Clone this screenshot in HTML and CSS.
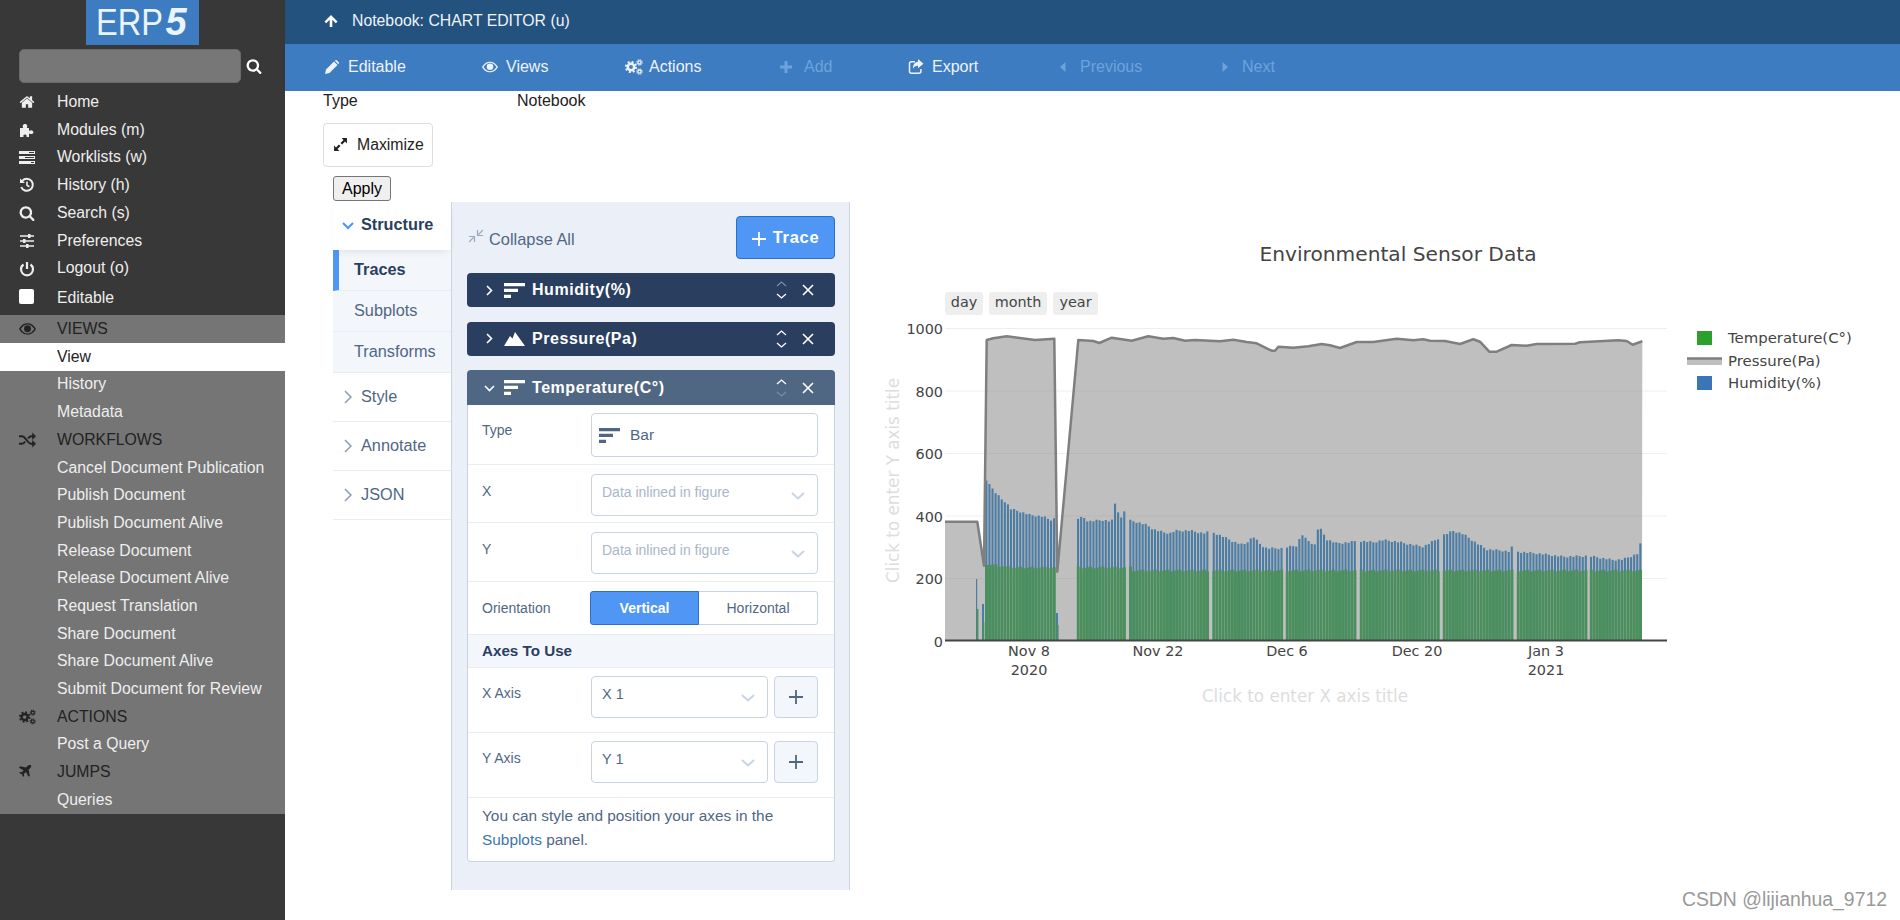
FILE: index.html
```html
<!DOCTYPE html>
<html lang="en">
<head>
<meta charset="utf-8">
<title>Notebook: CHART EDITOR</title>
<link rel="stylesheet" href="styles.css">
</head>
<body>
<svg class="defs" xmlns="http://www.w3.org/2000/svg">
  <symbol id="i-home" viewBox="0 0 1792 1792"><path d="M1472 992v480q0 26-19 45t-45 19h-384v-384h-256v384h-384q-26 0-45-19t-19-45v-480q0-1 .5-3t.5-3l575-474 575 474q1 2 1 6zm223-69l-62 74q-8 9-21 11h-3q-13 0-21-7l-692-577-692 577q-12 8-24 7-13-2-21-11l-62-74q-8-10-7-23.5t11-21.5l719-599q32-26 76-26t76 26l244 204v-195q0-14 9-23t23-9h192q14 0 23 9t9 23v408l219 182q10 8 11 21.5t-7 23.5z"/></symbol>
  <symbol id="i-search" viewBox="0 0 1792 1792"><path d="M1216 832q0-185-131.500-316.500t-316.500-131.500-316.500 131.500-131.500 316.500 131.500 316.500 316.500 131.500 316.500-131.500 131.500-316.500zm512 832q0 52-38 90t-90 38q-54 0-90-38l-343-342q-179 124-399 124-143 0-273.500-55.500t-225-150-150-225-55.500-273.500 55.500-273.500 150-225 225-150 273.500-55.500 273.500 55.500 225 150 150 225 55.500 273.500q0 220-124 399l343 343q37 37 37 90z"/></symbol>
  <symbol id="i-puzzle" viewBox="0 0 16 16"><path d="M1 6h3.200c-.9-1.700-.5-4 1.800-4s2.700 2.300 1.800 4H10v3c1.300-.9 3.100-1 4 .2.500.8.500 1.300 0 2-.9 1.200-2.700 1.100-4 .2V15H7.400c.6-1.300.2-2.600-1.400-2.600S4 13.700 4.600 15H1z"/></symbol>
  <symbol id="i-tasks" viewBox="0 0 16 16"><path d="M0 1h16v3H0zM0 6h16v3H0zM0 11h16v3H0z"/><path class="cut" d="M10 2h5v1h-5zM6 7h9v1H6zM12 12h3v1h-3z"/></symbol>
  <symbol id="i-history" viewBox="0 0 16 16"><path class="stroke" stroke-width="2" d="M3.300 3.800A6 6 0 1 1 2.200 10"/><path d="M1 1.500l5 4.500H1z"/><path class="stroke" stroke-width="1.600" d="M8 4.500V8.300l2.400 1.400"/></symbol>
  <symbol id="i-sliders" viewBox="0 0 16 16"><path class="stroke" stroke-width="1.300" d="M1 3h14M1 8h14M1 13h14"/><path d="M9 1h2.500v4H9zM4 6h2.500v4H4zM7 11h2.500v4H7z"/></symbol>
  <symbol id="i-power" viewBox="0 0 16 16"><path class="stroke" stroke-width="2.200" d="M4.500 3.500a6 6 0 1 0 7 0"/><path class="stroke" stroke-width="2.200" d="M8 1v7"/></symbol>
  <symbol id="i-eye" viewBox="0 0 18 14"><path fill-rule="evenodd" d="M0 7C3 2 6 1 9 1s6 1 9 6c-3 5-6 6-9 6s-6-1-9-6zm1.800 0C4 10.300 6.500 11.700 9 11.700S14 10.300 16.200 7C14 3.700 11.500 2.300 9 2.300S4 3.700 1.800 7z"/><circle cx="9" cy="6.800" r="3.700"/></symbol>
  <symbol id="i-shuffle" viewBox="0 0 18 16"><path class="stroke" stroke-width="2" d="M0 4h3c4 0 6 8 10 8h2M0 12h3c1.500 0 2.500-1 3.500-2.500M9.500 6.500C10.500 5 11.500 4 13 4h2"/><path d="M14 0l4 4-4 4zM14 8l4 4-4 4z"/></symbol>
  <symbol id="i-gears" viewBox="0 0 18 16"><circle class="stroke" cx="6" cy="8" r="3.200" stroke-width="2.500"/><circle class="stroke" cx="6" cy="8" r="5.100" stroke-width="2" stroke-dasharray="2 2"/><circle class="stroke" cx="14.500" cy="3.400" r="1.600" stroke-width="1.300"/><circle class="stroke" cx="14.500" cy="3.400" r="2.700" stroke-width="1.100" stroke-dasharray="1.100 1"/><circle class="stroke" cx="14.500" cy="12.600" r="1.600" stroke-width="1.300"/><circle class="stroke" cx="14.500" cy="12.600" r="2.700" stroke-width="1.100" stroke-dasharray="1.100 1"/></symbol>
  <symbol id="i-plane" viewBox="0 -1 18 18" preserveAspectRatio="xMinYMid"><path d="M13.500.5c.7.700-.2 2.400-1 3.200L10.800 5.400l1.400 6.700-1.500 1.200-2.800-5.400L5.400 10.300l.4 2-1.100 1.200-1.500-3-3-1.500 1.100-1.100 2 .4L5.200 5.900 0 3.100l1.200-1.500 6.700 1.400 1.700-1.700C10.400.500 12.800-.2 13.500.5z"/></symbol>
  <symbol id="i-pencil" viewBox="0 0 16 16"><path d="M1 15l1-4.500L10 2.500 13.500 6l-8 8zM11 1.500c.7-.7 1.500-.7 2.100 0L14.500 3c.6.600.6 1.400 0 2L14.300 5.200 10.800 1.700z"/></symbol>
  <symbol id="i-export" viewBox="0 0 16 16"><path class="stroke" stroke-width="1.500" d="M7 2.800H3.500A2 2 0 0 0 1.500 4.800v7.400a2 2 0 0 0 2 2h7.400a2 2 0 0 0 2-2V10"/><path d="M10 0l5.500 4.700L10 9.300V6.800C7.500 6.800 5.800 7.500 5 10 4.700 6 6.700 3 10 2.800z"/></symbol>
  <symbol id="i-expand" viewBox="0 0 14 14"><path d="M8 1h5v5l-1.800-1.800L8.500 7 7 5.500l2.800-2.700zM6 13H1V8l1.800 1.800L5.500 7 7 8.500l-2.800 2.700z"/></symbol>
  <symbol id="i-bars" viewBox="0 0 21 15"><path d="M0 0h21v3.300H0zM0 5.800h14v3.300H0zM0 11.700h7V15H0z"/></symbol>
  <symbol id="i-area" viewBox="0 0 21 15"><path d="M0 15L6 5l2.500 2.500L11 1l10 14z"/></symbol>
  <symbol id="i-collapse" viewBox="0 0 14 14"><path d="M14 1L9.500 5.500M8.500 1v5.500H14M0 13l4.500-4.500M5.500 13V7.500H0" class="stroke" stroke-width="1.200"/></symbol>
</svg>

<div class="app">
  <aside class="sidebar">
    <div class="logo-wrap"><div class="logo"><span class="logo-erp">ERP</span><span class="logo-five">5</span></div></div>
    <div class="search-row">
      <div class="search-box"></div>
      <svg class="search-icon"><use href="#i-search"/></svg>
    </div>
    <nav class="menu-top">
      <a class="mi"><svg class="mi-ic"><use href="#i-home"/></svg>Home</a>
      <a class="mi"><svg class="mi-ic"><use href="#i-puzzle"/></svg>Modules (m)</a>
      <a class="mi"><svg class="mi-ic"><use href="#i-tasks"/></svg>Worklists (w)</a>
      <a class="mi"><svg class="mi-ic"><use href="#i-history"/></svg>History (h)</a>
      <a class="mi"><svg class="mi-ic"><use href="#i-search"/></svg>Search (s)</a>
      <a class="mi"><svg class="mi-ic"><use href="#i-sliders"/></svg>Preferences</a>
      <a class="mi"><svg class="mi-ic"><use href="#i-power"/></svg>Logout (o)</a>
      <a class="mi mi-check"><span class="checkbox"></span>Editable</a>
    </nav>
    <nav class="menu-band">
      <div class="mi mi-head"><svg class="mi-ic"><use href="#i-eye"/></svg>VIEWS</div>
      <a class="mi mi-active">View</a>
      <a class="mi">History</a>
      <a class="mi">Metadata</a>
      <div class="mi mi-head"><svg class="mi-ic"><use href="#i-shuffle"/></svg>WORKFLOWS</div>
      <a class="mi">Cancel Document Publication</a>
      <a class="mi">Publish Document</a>
      <a class="mi">Publish Document Alive</a>
      <a class="mi">Release Document</a>
      <a class="mi">Release Document Alive</a>
      <a class="mi">Request Translation</a>
      <a class="mi">Share Document</a>
      <a class="mi">Share Document Alive</a>
      <a class="mi">Submit Document for Review</a>
      <div class="mi mi-head"><svg class="mi-ic"><use href="#i-gears"/></svg>ACTIONS</div>
      <a class="mi">Post a Query</a>
      <div class="mi mi-head"><svg class="mi-ic"><use href="#i-plane"/></svg>JUMPS</div>
      <a class="mi">Queries</a>
    </nav>
  </aside>

  <main class="main">
    <header class="titlebar">
      <svg class="up-ic" viewBox="0 0 14 14"><path d="M7 1l6.500 6.500-1.700 1.700L8.300 5.800V13H5.700V5.800L2.200 9.200.5 7.500z"/></svg>
      <span>Notebook: CHART EDITOR (u)</span>
    </header>
    <div class="toolbar">
      <a class="tool tool-edit"><svg class="tool-ic"><use href="#i-pencil"/></svg>Editable</a>
      <a class="tool tool-views"><svg class="tool-ic"><use href="#i-eye"/></svg>Views</a>
      <a class="tool tool-actions"><svg class="tool-ic"><use href="#i-gears"/></svg>Actions</a>
      <a class="tool tool-add off"><svg class="tool-ic tool-plus" viewBox="0 0 12 12"><path d="M4.500 0h3v4.500H12v3H7.500V12h-3V7.500H0v-3h4.500z"/></svg>Add</a>
      <a class="tool tool-export"><svg class="tool-ic"><use href="#i-export"/></svg>Export</a>
      <a class="tool tool-prev off"><svg class="tool-tri" viewBox="0 0 6 10"><path d="M5.500 0v10L0 5z"/></svg>Previous</a>
      <a class="tool tool-next off"><svg class="tool-tri" viewBox="0 0 6 10"><path d="M.5 0v10L6 5z"/></svg>Next</a>
    </div>

    <section class="content">
      <div class="type-row"><span class="type-label">Type</span><span>Notebook</span></div>
      <a class="maximize"><svg class="max-ic"><use href="#i-expand"/></svg>Maximize</a>
      <button class="apply" type="button">Apply</button>

      <div class="editor">
        <div class="side-nav">
          <div class="group group-open">
            <svg class="gchev gchev-open" viewBox="0 0 12 8"><path d="M1 1l5 5 5-5"/></svg>Structure
          </div>
          <div class="subs">
            <div class="sub sub-active">Traces</div>
            <div class="sub">Subplots</div>
            <div class="sub">Transforms</div>
          </div>
          <div class="group"><svg class="gchev" viewBox="0 0 8 14"><path d="M1 1l6 6-6 6"/></svg>Style</div>
          <div class="group"><svg class="gchev" viewBox="0 0 8 14"><path d="M1 1l6 6-6 6"/></svg>Annotate</div>
          <div class="group"><svg class="gchev" viewBox="0 0 8 14"><path d="M1 1l6 6-6 6"/></svg>JSON</div>
        </div>

        <div class="panel">
          <div class="panel-top">
            <a class="collapse"><svg class="collapse-ic"><use href="#i-collapse"/></svg>Collapse All</a>
            <a class="trace-btn"><svg class="trace-plus" viewBox="0 0 14 14"><path d="M7 0v14M0 7h14"/></svg>Trace</a>
          </div>

          <div class="fold">
            <div class="fold-head">
              <svg class="fchev" viewBox="0 0 7 11"><path d="M1 1l4.500 4.500L1 10"/></svg>
              <svg class="fold-type"><use href="#i-bars"/></svg>
              <span class="fold-name">Humidity(%)</span>
              <span class="updown">
                <svg class="ud dim" viewBox="0 0 11 6"><path d="M1 5l4.500-4L10 5"/></svg>
                <svg class="ud" viewBox="0 0 11 6"><path d="M1 1l4.500 4L10 1"/></svg>
              </span>
              <svg class="fclose" viewBox="0 0 12 12"><path d="M1 1l10 10M11 1L1 11"/></svg>
            </div>
          </div>

          <div class="fold">
            <div class="fold-head">
              <svg class="fchev" viewBox="0 0 7 11"><path d="M1 1l4.500 4.500L1 10"/></svg>
              <svg class="fold-type"><use href="#i-area"/></svg>
              <span class="fold-name">Pressure(Pa)</span>
              <span class="updown">
                <svg class="ud" viewBox="0 0 11 6"><path d="M1 5l4.500-4L10 5"/></svg>
                <svg class="ud" viewBox="0 0 11 6"><path d="M1 1l4.500 4L10 1"/></svg>
              </span>
              <svg class="fclose" viewBox="0 0 12 12"><path d="M1 1l10 10M11 1L1 11"/></svg>
            </div>
          </div>

          <div class="fold">
            <div class="fold-head fold-head-open">
              <svg class="fchev fchev-open" viewBox="0 0 11 7"><path d="M1 1l4.500 4.500L10 1"/></svg>
              <svg class="fold-type"><use href="#i-bars"/></svg>
              <span class="fold-name">Temperature(C°)</span>
              <span class="updown">
                <svg class="ud" viewBox="0 0 11 6"><path d="M1 5l4.500-4L10 5"/></svg>
                <svg class="ud dim" viewBox="0 0 11 6"><path d="M1 1l4.500 4L10 1"/></svg>
              </span>
              <svg class="fclose" viewBox="0 0 12 12"><path d="M1 1l10 10M11 1L1 11"/></svg>
            </div>
            <div class="fold-body">
              <div class="row row-type">
                <label class="row-label">Type</label>
                <div class="input input-type"><svg class="type-ic"><use href="#i-bars"/></svg>Bar</div>
              </div>
              <div class="row row-data">
                <label class="row-label">X</label>
                <div class="input input-select ghost">Data inlined in figure<svg class="schev" viewBox="0 0 14 8"><path d="M1 1l6 5.500L13 1"/></svg></div>
              </div>
              <div class="row row-data row-data-y">
                <label class="row-label">Y</label>
                <div class="input input-select ghost">Data inlined in figure<svg class="schev" viewBox="0 0 14 8"><path d="M1 1l6 5.500L13 1"/></svg></div>
              </div>
              <div class="row row-orient">
                <label class="row-label row-label-mid">Orientation</label>
                <div class="radio">
                  <span class="radio-btn radio-on">Vertical</span>
                  <span class="radio-btn radio-off">Horizontal</span>
                </div>
              </div>
              <div class="axes-head">Axes To Use</div>
              <div class="row row-axis">
                <label class="row-label">X Axis</label>
                <div class="input input-select input-axis">X 1<svg class="schev" viewBox="0 0 14 8"><path d="M1 1l6 5.500L13 1"/></svg></div>
                <a class="add-axis"><svg class="add-ic" viewBox="0 0 14 14"><path d="M7 0v14M0 7h14"/></svg></a>
              </div>
              <div class="row row-axis">
                <label class="row-label">Y Axis</label>
                <div class="input input-select input-axis">Y 1<svg class="schev" viewBox="0 0 14 8"><path d="M1 1l6 5.500L13 1"/></svg></div>
                <a class="add-axis"><svg class="add-ic" viewBox="0 0 14 14"><path d="M7 0v14M0 7h14"/></svg></a>
              </div>
              <p class="help">You can style and position your axes in the <a class="help-link">Subplots</a> panel.</p>
            </div>
          </div>
        </div>

        <svg class="chart" viewBox="850 202 1050 700" xmlns="http://www.w3.org/2000/svg">
          <text class="c-title" x="1398" y="261">Environmental Sensor Data</text>
          <g class="c-range">
            <rect x="945" y="292" width="38" height="23" rx="3"/>
            <rect x="989" y="292" width="58" height="23" rx="3"/>
            <rect x="1053" y="292" width="45" height="23" rx="3"/>
          </g>
          <text class="c-tick c-mid" x="964" y="307">day</text>
          <text class="c-tick c-mid" x="1018" y="307">month</text>
          <text class="c-tick c-mid" x="1075.500" y="307">year</text>
          <g class="c-grid">
            <path d="M945 328.500H1667M945 391H1667M945 453.500H1667M945 516H1667M945 578.500H1667"/>
          </g>
          <path id="area" class="c-area"/>
          <g id="bars"></g>
          <path id="line" class="c-line"/>
          <path class="c-axis" d="M945 640.500H1667"/>
          <g class="c-yticks">
            <text x="943" y="334">1000</text>
            <text x="943" y="396.500">800</text>
            <text x="943" y="459">600</text>
            <text x="943" y="521.500">400</text>
            <text x="943" y="584">200</text>
            <text x="943" y="646.500">0</text>
          </g>
          <g class="c-tick c-mid">
            <text x="1029" y="656">Nov 8</text>
            <text x="1029" y="675">2020</text>
            <text x="1158" y="656">Nov 22</text>
            <text x="1287" y="656">Dec 6</text>
            <text x="1417" y="656">Dec 20</text>
            <text x="1546" y="656">Jan 3</text>
            <text x="1546" y="675">2021</text>
          </g>
          <text class="c-ghost" transform="translate(899 480.500) rotate(-90)">Click to enter Y axis title</text>
          <text class="c-ghost" x="1305" y="702">Click to enter X axis title</text>
          <rect class="c-sw-green" x="1697" y="331" width="15" height="14"/>
          <rect class="c-sw-gray" x="1687" y="358" width="35" height="7"/>
          <path class="c-sw-line" d="M1687 358.500H1722"/>
          <rect class="c-sw-blue" x="1697" y="376" width="15" height="14"/>
          <g class="c-legend">
            <text x="1728" y="343">Temperature(C°)</text>
            <text x="1728" y="366">Pressure(Pa)</text>
            <text x="1728" y="388">Humidity(%)</text>
          </g>
        </svg>
      </div>
    </section>
  </main>
  <div class="watermark">CSDN @lijianhua_9712</div>
</div>
<script src="chart.js"></script>
</body>
</html>
```
FILE: styles.css
```css
* { box-sizing: border-box; }
html, body { margin: 0; padding: 0; height: 100%; overflow: hidden; }
body { font-family: "Liberation Sans", Arial, sans-serif; font-size: 16px; color: #222; background: #fff; }
.defs { display: none; }
.stroke { fill: none; stroke: currentColor; }
.cut { fill: #383838; }

.app { display: flex; width: 1900px; height: 920px; position: relative; }

/* Sidebar */
.sidebar { width: 285px; flex: none; background: #383838; color: #eee; }
.logo-wrap { display: flex; justify-content: center; height: 49px; }
.logo { width: 113px; height: 45px; margin-left: -1px; padding-left: 10px; background: #3d7cc1; color: #eaf4fb; display: flex; align-items: baseline; line-height: 45px; }
.logo-erp { display: inline-block; font-size: 37px; transform: scaleX(.88); transform-origin: left center; margin-right: -6px; }
.logo-five { font-style: italic; font-weight: 700; font-size: 38px; }
.search-row { display: flex; align-items: center; padding-left: 19px; height: 34px; margin-bottom: 5px; }
.search-box { width: 222px; height: 34px; background: #777; border: 1px solid #6a6a6a; border-radius: 5px; }
.search-icon { width: 16px; height: 16px; margin-left: 5px; fill: #fff; }
.menu-top { display: block; }
.mi { display: flex; align-items: center; height: 27.75px; padding-left: 57px; position: relative; color: #eee; font-size: 15.8px; }
.mi-ic { position: absolute; left: 19px; top: 6px; width: 16px; height: 16px; fill: currentColor; color: #eee; }
.mi-check { height: 33px; padding-bottom: 1px; }
.checkbox { position: absolute; left: 19px; top: 7px; width: 15px; height: 15px; background: #fff; border-radius: 2px; }
.menu-band { background: #757575; }
.menu-band .mi { height: 27.7px; }
.mi-head { color: #222; }
.mi-head .mi-ic { color: #222; width: 17px; }
.mi-active { background: #fff; color: #222; }
.menu-band .mi-active { color: #222; }

/* Header */
.main { flex: 1; min-width: 0; display: flex; flex-direction: column; }
.titlebar { height: 44px; flex: none; background: #24527e; color: #eef3f8; display: flex; align-items: center; padding: 0 0 2px 39px; font-size: 15.8px; }
.up-ic { width: 14px; height: 14px; fill: #fff; margin-right: 14px; }
.toolbar { height: 47px; flex: none; background: #3d7cc1; display: flex; align-items: center; padding: 0 0 1px 39px; color: #eef3f8; }
.tool { display: flex; align-items: center; flex: none; color: #eef3f8; }
.tool.off { color: #6da3dc; }
.tool-ic { width: 16px; height: 16px; fill: currentColor; margin-right: 8px; }
.tool-actions .tool-ic { width: 18px; margin-right: 6px; }
.tool-plus { width: 12px; height: 12px; margin-right: 12px; }
.tool-tri { width: 6px; height: 10px; fill: currentColor; margin-right: 14px; }
.tool-edit { width: 158px; }
.tool-views { width: 143px; }
.tool-actions { width: 155px; }
.tool-add { width: 128px; }
.tool-export { width: 152px; }
.tool-prev { width: 162px; }
.tool-next { width: 80px; }

/* Content */
.content { flex: 1; padding-left: 38px; min-height: 0; }
.type-row { display: flex; height: 19px; line-height: 19px; color: #222; }
.type-label { width: 194px; }
.maximize { display: flex; width: 110px; height: 44px; align-items: center; margin-top: 13px; padding: 0 0 1px 9px; border: 1px solid #ddd; border-radius: 4px; color: #222; font-size: 15.8px; }
.max-ic { width: 15px; height: 15px; margin-right: 9px; fill: #222; }
.apply { display: block; margin: 9px 0 0 10px; width: 58px; height: 25px; padding: 0; font: 16px "Liberation Sans", Arial, sans-serif; color: #000; background: #efefef; border: 1px solid #767676; border-radius: 3px; }
.editor { display: flex; margin: 1px 0 0 10px; height: 688px; }

/* Side nav */
.side-nav { width: 118px; flex: none; color: #506784; }
.group { display: flex; align-items: center; height: 49px; padding: 0 0 2px 11px; border-bottom: 1px solid #e8edf3; position: relative; font-size: 16.3px; }
.group-open { height: 48px; color: #2a3f5f; font-weight: 700; border-bottom: 0; box-shadow: 0 4px 8px -4px rgba(42, 63, 95, .15); z-index: 1; padding-bottom: 3px; padding-left: 9px; }
.gchev { width: 8px; height: 14px; fill: none; stroke: #8c9bb0; stroke-width: 1.5; margin-right: 9px; margin-top: 2px; }
.gchev-open { width: 12px; height: 8px; stroke: #4a95f5; stroke-width: 2; margin-right: 7px; margin-top: 3px; }
.subs { background: #f3f6fa; }
.sub { height: 41px; display: flex; align-items: center; padding: 0 0 2px 21px; border-bottom: 1px solid #e8edf3; font-size: 16.3px; }
.sub-active { color: #2a3f5f; font-weight: 700; border-left: 6px solid #4f96f5; padding-left: 15px; }

/* Panel */
.panel { width: 399px; flex: none; background: #ebf0f8; border-left: 1px solid #c8d4e3; border-right: 1px solid #c8d4e3; padding: 14px 14px 0 15px; color: #506784; }
.panel-top { display: flex; justify-content: space-between; align-items: center; height: 43px; margin-bottom: 14px; }
.collapse { display: flex; align-items: center; color: #506784; font-size: 16.4px; padding: 0 0 0 2px; margin-top: 3px; }
.collapse-ic { width: 14px; height: 14px; margin-right: 6px; color: #9aa8bb; margin-top: -7px; }
.trace-btn { width: 99px; height: 43px; background: #4f96f5; border: 1px solid #2a70c8; border-radius: 4px; color: #fff; font-weight: 700; letter-spacing: .7px; display: flex; align-items: center; justify-content: center; font-size: 16.5px; }
.trace-plus { width: 14px; height: 14px; fill: none; stroke: #fff; stroke-width: 1.8; margin-right: 7px; margin-top: 2px; }
.fold { margin-bottom: 14.5px; }
.fold-head { height: 34px; background: #2a3f5f; border-radius: 4px; display: flex; align-items: center; color: #fff; padding-left: 19px; position: relative; }
.fold-head-open { height: 35px; background: #506784; border-radius: 4px 4px 0 0; }
.fchev { width: 7px; height: 11px; fill: none; stroke: #fff; stroke-width: 1.6; margin-right: 11px; }
.fchev-open { width: 11px; height: 7px; margin-left: -2px; margin-right: 9px; margin-top: 2px; }
.fold-type { width: 21px; height: 15px; fill: #fff; margin-right: 7px; }
.fold-name { font-weight: 700; font-size: 16px; letter-spacing: .55px; flex: 1; }
.updown { display: flex; flex-direction: column; gap: 6px; margin-right: 15px; }
.ud { display: block; width: 11px; height: 6px; fill: none; stroke: #fff; stroke-width: 1.3; }
.ud.dim { stroke: #7a8ba3; }
.fclose { width: 12px; height: 12px; fill: none; stroke: #fff; stroke-width: 1.6; margin-right: 21px; }
.fold-body { background: #fff; border: 1px solid #c8d4e3; border-top: 0; border-radius: 0 0 4px 4px; height: 457px; }
.row { display: flex; border-bottom: 1px solid #e8edf3; padding: 8px 16px 0 14px; }
.row-label { width: 109px; flex: none; margin-top: 9px; line-height: 16px; font-size: 14px; color: #506784; }
.row-label-mid { margin-top: 0; align-self: center; }
.input { width: 227px; border: 1px solid #c8d4e3; border-radius: 4px; background: #fff; font-size: 14px; color: #506784; position: relative; }
.row-type { height: 60px; }
.input-type { height: 44px; display: flex; align-items: center; font-size: 15.5px; padding-left: 6px; }
.type-ic { width: 23px; height: 15px; fill: #506784; margin-right: 9px; }
.row-data { height: 58px; padding-top: 9px; }
.row-data-y { height: 59px; }
.input-select { height: 42px; padding: 9px 0 0 10px; line-height: 16px; }
.ghost { color: #a9b6c9; }
.schev { position: absolute; right: 12px; top: 17px; width: 14px; height: 8px; fill: none; stroke: #c8d4e3; stroke-width: 2; }
.row-orient { height: 53px; padding-top: 0; align-items: center; }
.radio { display: flex; width: 228px; height: 34px; margin-left: -1px; margin-top: 0; font-size: 14px; }
.radio-btn { display: flex; align-items: center; justify-content: center; border: 1px solid #c8d4e3; }
.radio-on { width: 109px; background: #4f96f5; border-color: #2a70c8; color: #fff; font-weight: 700; border-radius: 3px 0 0 3px; }
.radio-off { flex: 1; border-left: 0; color: #506784; border-radius: 0 3px 3px 0; background: #fff; }
.axes-head { height: 33px; background: #f3f6fa; border-bottom: 1px solid #e8edf3; color: #2a3f5f; font-weight: 700; font-size: 15.2px; line-height: 31px; padding-left: 14px; }
.row-axis { height: 65px; }
.input-axis { width: 177px; font-size: 14.5px; }
.add-axis { width: 44px; height: 42px; margin-left: 6px; background: #f3f6fa; border: 1px solid #c8d4e3; border-radius: 4px; display: flex; align-items: center; justify-content: center; }
.add-ic { width: 14px; height: 14px; fill: none; stroke: #506784; stroke-width: 1.8; }
.help { margin: 0; padding: 6px 14px 0; font-size: 15.4px; line-height: 24px; color: #506784; }
.help-link { color: #3a75b0; }

/* Chart */
.chart { width: 1050px; height: 700px; flex: none; display: block; }
.chart text { font-family: "DejaVu Sans", Verdana, sans-serif; }
.c-title { font-size: 20.2px; fill: #444; text-anchor: middle; }
.c-range rect { fill: #eee; }
.c-tick { font-size: 14.4px; fill: #444; }
.c-legend { font-size: 14.9px; fill: #444; }
.c-mid { text-anchor: middle; }
.c-grid path { stroke: #eee; stroke-width: 1; fill: none; }
.c-area { fill: #7f7f7f; fill-opacity: .5; stroke: none; }
.c-line { fill: none; stroke: #7f7f7f; stroke-width: 2.5; stroke-linejoin: round; }
.c-axis { stroke: #444; stroke-width: 2; fill: none; }
.c-yticks text { font-size: 14.4px; fill: #444; text-anchor: end; }
.c-ghost { font-size: 16.8px; fill: #ddd; text-anchor: middle; }
.c-sw-green { fill: #2ca02c; }
.c-sw-blue { fill: #3a76b6; }
.c-sw-gray { fill: #bfbfbf; }
.c-sw-line { stroke: #7f7f7f; stroke-width: 2.5; fill: none; }
.c-bar-blue { fill: #4c7da5; }
.c-bar-green { fill: #4a8f5c; }

.watermark { position: absolute; right: 13px; top: 888px; font-size: 19.4px; line-height: 22px; color: #999; }
```
FILE: chart.js
```js
(function () {
  var NS = 'http://www.w3.org/2000/svg';
  var bars = document.getElementById('bars');
  var Y0 = 640;

  function pts(x0, list) {
    var out = [];
    for (var i = 0; i < list.length; i += 2) {
      out.push([x0 + list[i] / 3, 280 + list[i + 1] / 3]);
    }
    return out;
  }

  var pressure = pts(870, [225,725, 322,725, 342,857, 350,180, 370,175, 410,169, 495,180, 553,176, 562,875,
    625,180, 670,183, 688,189, 725,173, 785,182, 835,169, 880,176, 910,174, 945,182, 975,180, 1050,184,
    1090,179, 1130,186]).concat(pts(1250, [-10,186, 20,190, 50,205, 65,212, 75,212, 85,200, 130,203, 175,199,
    215,192, 240,196, 270,204, 320,186, 370,186, 440,176, 490,181, 520,178, 540,182, 585,183, 630,192,
    670,178, 690,185, 718,215, 740,215, 785,195, 830,197, 860,192, 975,191, 990,187, 1105,181, 1130,183,
    1148,194, 1177,184]));

  var d = pressure.map(function (p, i) {
    return (i ? 'L' : 'M') + p[0].toFixed(1) + ' ' + p[1].toFixed(1);
  }).join('');
  document.getElementById('line').setAttribute('d', d);
  document.getElementById('area').setAttribute('d', d + 'L1642 ' + Y0 + 'L945 ' + Y0 + 'Z');

  var blueTop = pts(870, [346,600, 357,607, 366,625, 378,640, 395,658, 407,666, 423,687, 450,695, 480,705,
    520,710, 540,720, 552,716, 621,716, 640,712, 655,724, 700,720, 725,725, 735,670, 745,697, 752,717,
    763,692, 768,720, 778,721, 800,726, 830,735, 850,748, 880,757, 900,760, 915,752, 960,752, 1000,760,
    1012,757, 1028,757, 1060,770, 1090,785, 1120,795, 1150,770, 1170,792]).concat(pts(1250, [-20,800, 0,795,
    12,770, 28,793, 50,805, 95,805, 108,802, 140,797, 155,762, 170,780, 195,795, 205,738, 218,757, 230,778,
    260,790, 300,787, 320,782, 332,783, 370,787, 400,780, 440,785, 480,793, 520,800, 560,778, 580,765,
    610,753, 640,762, 680,790, 710,808, 760,812, 780,815, 785,802, 802,815, 860,820, 940,830, 1010,828,
    1030,830, 1090,840, 1120,838, 1165,820, 1173,783]));

  function interp(list, x) {
    for (var i = 1; i < list.length; i++) {
      if (x <= list[i][0]) {
        var a = list[i - 1], b = list[i];
        return a[1] + (b[1] - a[1]) * (x - a[0]) / (b[0] - a[0]);
      }
    }
    return list[list.length - 1][1];
  }

  function rect(cls, x, top, w) {
    var r = document.createElementNS(NS, 'rect');
    r.setAttribute('class', cls);
    r.setAttribute('x', x.toFixed(2));
    r.setAttribute('y', top.toFixed(1));
    r.setAttribute('width', w);
    r.setAttribute('height', (Y0 - top).toFixed(1));
    bars.appendChild(r);
  }

  var segments = [[985.3, 1055.3], [1077, 1127.3], [1129.3, 1210.7], [1212.7, 1284], [1286, 1358],
    [1360, 1440.7], [1443, 1514.7], [1517, 1588], [1590, 1643]];
  var step = 3.08, n = 0;
  segments.forEach(function (seg) {
    for (var x = seg[0]; x + 2 <= seg[1]; x += step) {
      n++;
      var jitter = ((n * 7) % 5 - 2) * 0.45;
      var top = interp(blueTop, x + 1) + jitter;
      if (x > 1640) { top = Math.min(top, 541); }
      rect('c-bar-blue', x, top, 2.1);
      var base = x < 1010 ? 564 + (x - 985) * 0.14 : (x < 1130 ? 567.5 : 570.5);
      var gTop = base + ((n * 3) % 4 - 1.5) * 0.6;
      rect('c-bar-green', x - 0.2, gTop, 2.85);
    }
  });

  // the short bars around the gaps
  rect('c-bar-blue', 976, 579, 1.2);
  rect('c-bar-green', 976.6, 609, 1.8);
  rect('c-bar-blue', 982, 604, 2);
  rect('c-bar-green', 982.3, 622, 2);
  rect('c-bar-blue', 1056, 613, 2);
  rect('c-bar-green', 1056.6, 625, 2);
})();
```
